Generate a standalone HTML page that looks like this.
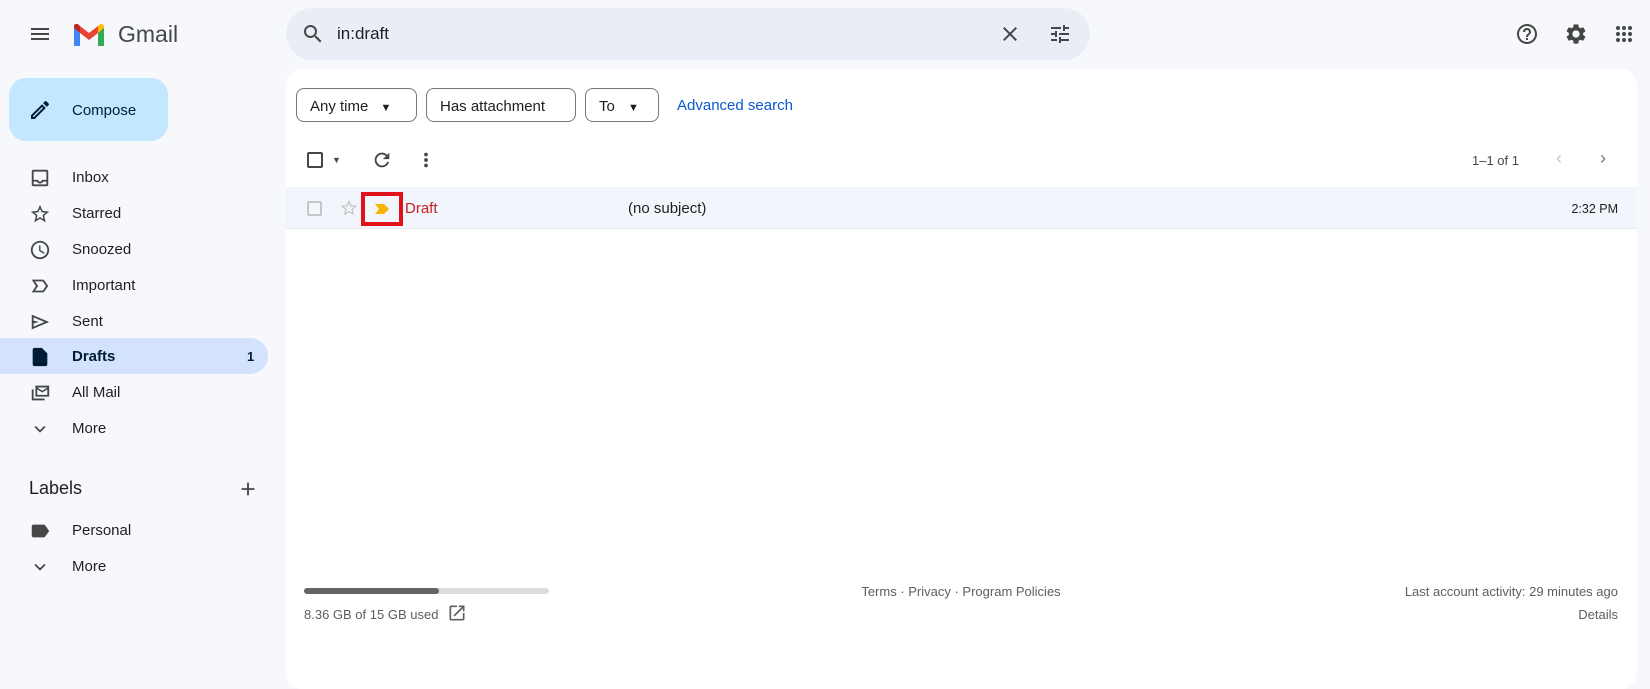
<!DOCTYPE html>
<html><head><meta charset="utf-8"><style>
*{box-sizing:border-box;margin:0;padding:0}
body{width:1650px;height:677px;background:#f6f8fc;font-family:"Liberation Sans",Arial,sans-serif;color:#202124;position:relative;overflow:hidden}
.a{position:absolute}
.ic{position:absolute;width:24px;height:24px;fill:#444746}
.nav{position:absolute;left:72px;font-size:15px;color:#1f1f1f}
.chip{position:absolute;top:88px;height:34px;border:1px solid #747775;border-radius:8px;font-size:15px;color:#1f1f1f;padding:0 13px;line-height:35px;background:#fff}
.small{font-size:13px;color:#5e5e5e}
</style></head><body>
<svg class="ic" style="left:28px;top:22px" viewBox="0 0 24 24"><path d="M3 18h18v-2H3v2zm0-5h18v-2H3v2zm0-7v2h18V6H3z"/></svg>
<svg class="a" style="left:72px;top:22px" width="34" height="26" viewBox="0 0 34 26"><path d="M2 4v20h6V11z" fill="#4285f4"/><path d="M26 11v13h6V4z" fill="#34a853"/><path d="M26 4v7l6-5V5c0-3-3-4-5-2z" fill="#fbbc04"/><path d="M8 11V4l9 7 9-7v7l-9 7z" fill="#ea4335"/><path d="M2 4v2l6 5V4L7 3C5 1 2 2 2 4z" fill="#c5221f"/></svg>
<div class="a" style="left:118px;top:21px;font-size:23px;color:#444746">Gmail</div>
<div class="a" style="left:286px;top:8px;width:804px;height:52px;border-radius:26px;background:#e9eef6"></div>
<svg class="ic" style="left:301px;top:22px" viewBox="0 0 24 24"><path d="M15.5 14h-.79l-.28-.27A6.47 6.47 0 0 0 16 9.5 6.5 6.5 0 1 0 9.5 16c1.61 0 3.09-.59 4.23-1.57l.27.28v.79l5 4.99L20.49 19l-4.99-5zm-6 0C7.01 14 5 11.99 5 9.5S7.01 5 9.5 5 14 7.01 14 9.5 11.99 14 9.5 14z"/></svg>
<div class="a" style="left:337px;top:24px;font-size:17px;color:#1f1f1f">in:draft</div>
<svg class="ic" style="left:998px;top:22px" viewBox="0 0 24 24"><path d="M19 6.41L17.59 5 12 10.59 6.41 5 5 6.41 10.59 12 5 17.59 6.41 19 12 13.41 17.59 19 19 17.59 13.41 12z"/></svg>
<svg class="ic" style="left:1048px;top:22px" viewBox="0 0 24 24"><path d="M3 17v2h6v-2H3zM3 5v2h10V5H3zm10 16v-2h8v-2h-8v-2h-2v6h2zM7 9v2H3v2h4v2h2V9H7zm14 4v-2H11v2h10zm-6-4h2V7h4V5h-4V3h-2v6z"/></svg>
<svg class="ic" style="left:1515px;top:22px" viewBox="0 0 24 24"><path d="M11 18h2v-2h-2v2zm1-16C6.48 2 2 6.48 2 12s4.48 10 10 10 10-4.48 10-10S17.52 2 12 2zm0 18c-4.41 0-8-3.59-8-8s3.590-8 8-8 8 3.59 8 8-3.59 8-8 8zm0-14c-2.21 0-4 1.79-4 4h2c0-1.1.9-2 2-2s2 .9 2 2c0 2-3 1.75-3 5h2c0-2.250 3-2.5 3-5 0-2.21-1.79-4-4-4z"/></svg>
<svg class="ic" style="left:1564px;top:22px" viewBox="0 0 24 24"><path d="M19.14 12.94c.04-.3.06-.61.06-.94 0-.32-.02-.64-.07-.94l2.03-1.58a.49.49 0 0 0 .12-.61l-1.92-3.32a.488.488 0 0 0-.59-.22l-2.39.96c-.5-.38-1.03-.7-1.62-.94l-.36-2.54a.484.484 0 0 0-.48-.41h-3.84c-.24 0-.43.17-.47.41l-.36 2.54c-.59.24-1.13.57-1.62.94l-2.39-.96c-.22-.08-.47 0-.59.22L2.74 8.87c-.12.21-.08.47.12.61l2.03 1.58c-.05.3-.09.63-.09.94s.02.64.07.94l-2.03 1.58a.49.49 0 0 0-.12.61l1.92 3.32c.12.22.37.29.59.22l2.39-.96c.5.38 1.03.7 1.62.94l.36 2.54c.05.24.24.41.48.41h3.84c.24 0 .44-.17.47-.41l.36-2.54c.59-.24 1.13-.56 1.62-.94l2.39.96c.22.08.47 0 .59-.22l1.92-3.32c.12-.22.07-.47-.12-.61l-2.01-1.58zM12 15.6c-1.98 0-3.6-1.62-3.6-3.6s1.62-3.6 3.6-3.6 3.6 1.62 3.6 3.6-1.62 3.6-3.6 3.6z"/></svg>
<svg class="ic" style="left:1612px;top:22px" viewBox="0 0 24 24"><path d="M6 8a2 2 0 1 0 0-4 2 2 0 0 0 0 4zm6 0a2 2 0 1 0 0-4 2 2 0 0 0 0 4zm6 0a2 2 0 1 0 0-4 2 2 0 0 0 0 4zM6 14a2 2 0 1 0 0-4 2 2 0 0 0 0 4zm6 0a2 2 0 1 0 0-4 2 2 0 0 0 0 4zm6 0a2 2 0 1 0 0-4 2 2 0 0 0 0 4zM6 20a2 2 0 1 0 0-4 2 2 0 0 0 0 4zm6 0a2 2 0 1 0 0-4 2 2 0 0 0 0 4zm6 0a2 2 0 1 0 0-4 2 2 0 0 0 0 4z"/></svg>

<div class="a" style="left:9px;top:78px;width:159px;height:63px;border-radius:17px;background:#c2e7ff"></div>
<svg class="ic" style="left:28px;top:98px;fill:#001d35" viewBox="0 0 24 24"><path d="M3 17.25V21h3.75L17.81 9.94l-3.75-3.75L3 17.25zM5.92 19H5v-.92l9.06-9.06.92.92L5.92 19zM20.71 5.63l-2.34-2.34a1 1 0 0 0-1.41 0l-1.83 1.83 3.75 3.75 1.83-1.830a1 1 0 0 0 0-1.41z"/></svg>
<div class="a" style="left:72px;top:102px;font-size:15px;color:#001d35">Compose</div>

<div class="a" style="left:0;top:338px;width:268px;height:36px;border-radius:0 18px 18px 0;background:#d3e3fd"></div>
<svg class="ic" style="left:29px;top:166px;width:22px" viewBox="0 0 24 24"><path d="M19 3H5a2 2 0 0 0-2 2v14a2 2 0 0 0 2 2h14a2 2 0 0 0 2-2V5a2 2 0 0 0-2-2zm0 16H5v-3h3.56c.69 1.19 1.97 2 3.45 2s2.75-.81 3.45-2H19v3zm0-5h-4.99c0 1.1-.9 2-2 2s-2-.9-2-2H5V5h14v9z"/></svg>
<div class="nav" style="top:169px">Inbox</div>
<svg class="ic" style="left:29px;top:202px;width:22px" viewBox="0 0 24 24"><path d="M22 9.24l-7.19-.62L12 2 9.19 8.63 2 9.24l5.46 4.73L5.820 21 12 17.27 18.18 21l-1.63-7.03L22 9.24zM12 15.4l-3.76 2.27 1-4.28-3.32-2.88 4.38-.38L12 6.1l1.71 4.04 4.38.38-3.32 2.88 1 4.28L12 15.4z"/></svg>
<div class="nav" style="top:205px">Starred</div>
<svg class="ic" style="left:29px;top:238px;width:22px" viewBox="0 0 24 24"><path d="M12 2C6.5 2 2 6.5 2 12s4.5 10 10 10 10-4.5 10-10S17.5 2 12 2zm0 18c-4.41 0-8-3.59-8-8s3.59-8 8-8 8 3.59 8 8-3.59 8-8 8zm.5-13H11v6l5.2 3.2.8-1.3-4.5-2.7V7z"/></svg>
<div class="nav" style="top:241px">Snoozed</div>
<svg class="ic" style="left:29px;top:274px;width:22px" viewBox="0 0 24 24"><path d="M15 19H3l4.5-7L3 5h12c.65 0 1.26.31 1.63.84L21 12l-4.37 6.16c-.37.52-.98.84-1.63.84zm-8.5-2H15l3.5-5L15 7H6.5l3.5 5-3.5 5z"/></svg>
<div class="nav" style="top:277px">Important</div>
<svg class="ic" style="left:29px;top:310px;width:22px" viewBox="0 0 24 24"><path d="M3 20V4l19 8-19 8zm2-3l11.85-5L5 7v3.5l6 1.5-6 1.5V17z"/></svg>
<div class="nav" style="top:313px">Sent</div>
<svg class="ic" style="left:29px;top:345px;width:22px;fill:#001d35" viewBox="0 0 24 24"><path d="M14 2H6c-1.1 0-2 .9-2 2v16c0 1.1.9 2 2 2h12c1.1 0 2-.9 2-2V8l-6-6z"/></svg>
<div class="nav" style="top:348px;font-weight:bold;color:#001d35">Drafts</div>
<div class="a" style="left:247px;top:349px;font-size:13px;font-weight:bold;color:#001d35">1</div>
<svg class="ic" style="left:29px;top:381px;width:22px" viewBox="0 0 24 24"><path d="M3 8v12h14v-2H5V8H3zm4-4v12h15V4H7zm13 10H9V8l5.5 3.5L20 8v6zm-5.5-4.5L9 6h11l-5.5 3.5z"/></svg>
<div class="nav" style="top:384px">All Mail</div>
<svg class="ic" style="left:29px;top:417px;width:22px" viewBox="0 0 24 24"><path d="M7.41 8.59L12 13.17l4.59-4.58L18 10l-6 6-6-6z"/></svg>
<div class="nav" style="top:420px">More</div>
<div class="a" style="left:29px;top:478px;font-size:18px;color:#1f1f1f">Labels</div>
<svg class="ic" style="left:237px;top:477px;width:22px" viewBox="0 0 24 24"><path d="M19 13h-6v6h-2v-6H5v-2h6V5h2v6h6v2z"/></svg>
<svg class="ic" style="left:29px;top:519px;width:22px" viewBox="0 0 24 24"><path d="M17.63 5.84C17.27 5.33 16.67 5 16 5L5 5.01C3.9 5.01 3 5.9 3 7v10c0 1.1.9 1.99 2 1.99L16 19c.67 0 1.27-.33 1.63-.84L22 12l-4.37-6.16z"/></svg>
<div class="nav" style="top:522px">Personal</div>
<svg class="ic" style="left:29px;top:555px;width:22px" viewBox="0 0 24 24"><path d="M7.41 8.59L12 13.17l4.59-4.58L18 10l-6 6-6-6z"/></svg>
<div class="nav" style="top:558px">More</div>

<div class="a" style="left:286px;top:69px;width:1351px;height:620px;background:#fff;border-radius:16px"></div>
<div class="chip" style="left:296px;width:121px">Any time <span style="font-size:11px;margin-left:8px">▼</span></div>
<div class="chip" style="left:426px;width:150px">Has attachment</div>
<div class="chip" style="left:585px;width:74px">To <span style="font-size:11px;margin-left:9px">▼</span></div>
<div class="a" style="left:677px;top:97px;font-size:15px;color:#0b57d0">Advanced search</div>

<div class="a" style="left:307px;top:152px;width:16px;height:16px;border:2px solid #444746;border-radius:2px"></div>
<div class="a" style="left:332px;top:155px;font-size:9px;color:#444746">▼</div>
<svg class="ic" style="left:371px;top:148px;width:22px" viewBox="0 0 24 24"><path d="M17.65 6.35A7.96 7.96 0 0 0 12 4a8 8 0 1 0 7.73 10h-2.08A6 6 0 1 1 12 6c1.66 0 3.14.69 4.22 1.78L13 11h7V4l-2.35 2.35z"/></svg>
<svg class="ic" style="left:415px;top:148px;width:22px" viewBox="0 0 24 24"><path d="M12 8a2 2 0 1 0 0-4 2 2 0 0 0 0 4zm0 2a2 2 0 1 0 0 4 2 2 0 0 0 0-4zm0 6a2 2 0 1 0 0 4 2 2 0 0 0 0-4z"/></svg>
<div class="a small" style="left:1472px;top:153px;color:#444746">1–1 of 1</div>
<div class="a" style="left:1556px;top:148px;font-size:18px;color:#c4c7c5">‹</div>
<div class="a" style="left:1600px;top:148px;font-size:18px;color:#747775">›</div>

<div class="a" style="left:286px;top:187px;width:1351px;height:42px;background:#f2f6fc;border-bottom:1px solid #e6e9ef"></div>
<div class="a" style="left:307px;top:201px;width:15px;height:15px;border:2px solid #c4c7c5;border-radius:2px"></div>
<svg class="ic" style="left:339px;top:198px;width:20px;height:20px;fill:#c4c7c5" viewBox="0 0 24 24"><path d="M22 9.24l-7.19-.62L12 2 9.19 8.63 2 9.24l5.46 4.73L5.82 21 12 17.27 18.18 21l-1.63-7.03L22 9.24zM12 15.4l-3.76 2.27 1-4.28-3.32-2.88 4.38-.38L12 6.1l1.71 4.04 4.38.38-3.32 2.88 1 4.28L12 15.4z"/></svg>
<div class="a" style="left:361px;top:192px;width:42px;height:34px;border:4px solid #e0121c;background:#f2f6fc"></div>
<svg class="a" style="left:374px;top:203px" width="16" height="12" viewBox="0 0 16 12"><path d="M1 1h9l5 5-5 5H1l4-5z" fill="#f4b400"/></svg>
<div class="a" style="left:405px;top:200px;font-size:15px;color:#c5221f">Draft</div>
<div class="a" style="left:628px;top:200px;font-size:15px;color:#1f1f1f">(no subject)</div>
<div class="a" style="left:1560px;top:202px;width:58px;text-align:right;font-size:12.5px;color:#1f1f1f">2:32 PM</div>

<div class="a" style="left:304px;top:588px;width:245px;height:6px;border-radius:3px;background:#dcdcdc"></div>
<div class="a" style="left:304px;top:588px;width:135px;height:6px;border-radius:3px;background:#646464"></div>
<div class="a small" style="left:304px;top:607px">8.36 GB of 15 GB used</div>
<svg class="ic" style="left:447px;top:603px;width:20px;height:20px;fill:#5e5e5e" viewBox="0 0 24 24"><path d="M19 19H5V5h7V3H5a2 2 0 0 0-2 2v14a2 2 0 0 0 2 2h14c1.1 0 2-.9 2-2v-7h-2v7zM14 3v2h3.59l-9.83 9.83 1.41 1.41L19 6.41V10h2V3h-7z"/></svg>
<div class="a small" style="left:858px;top:584px;width:206px;text-align:center">Terms · Privacy · Program Policies</div>
<div class="a small" style="left:1318px;top:584px;width:300px;text-align:right">Last account activity: 29 minutes ago</div>
<div class="a small" style="left:1518px;top:607px;width:100px;text-align:right">Details</div>
</body></html>
